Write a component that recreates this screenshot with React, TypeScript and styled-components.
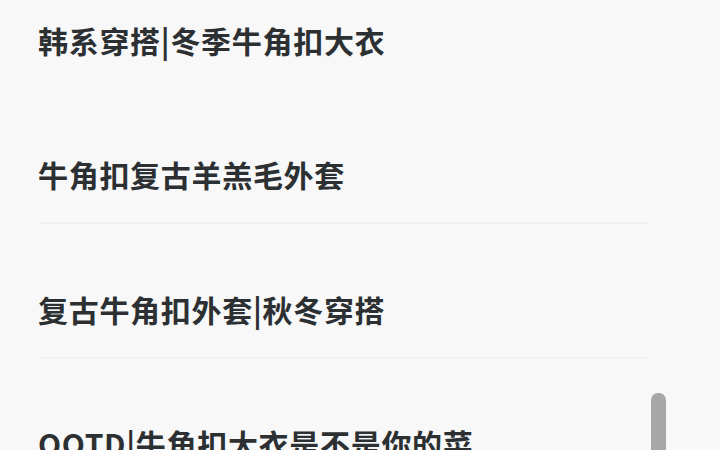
import React from "react";
import styled, { createGlobalStyle } from "styled-components";

const Global = createGlobalStyle`
  html, body { margin: 0; padding: 0; background: #f8f8f8; overflow: hidden; }
  #root { width: 720px; height: 450px; }
`;

const Page = styled.div`
  position: relative;
  width: 720px;
  height: 450px;
  overflow: hidden;
  background: #f8f8f8;
  display: flex;
`;

const List = styled.ul`
  list-style: none;
  margin: 0;
  padding: 0 0 0 40px;
  width: 608px;
  display: flex;
  flex-direction: column;
`;

const Item = styled.li`
  flex: 0 0 auto;
  height: 134.5px;
  box-sizing: border-box;
  padding-top: 19.5px;
  display: flex;
  flex-direction: column;
`;

const Title = styled.div`
  font-family: "Noto Sans CJK SC", "Noto Sans", sans-serif;
  font-weight: 700;
  font-size: 30px;
  line-height: 40px;
  letter-spacing: 0.7px;
  color: #2c3033;
  margin-left: -2px;
  white-space: nowrap;
`;

const Divider = styled.div<{ $show: boolean }>`
  margin-top: 28px;
  height: 2px;
  background: ${(p) => (p.$show ? "#f0f0f0" : "transparent")};
`;

const Track = styled.div`
  flex: 1;
  margin-left: 27px;
  background: #f9f9fa;
`;

const Thumb = styled.div`
  position: absolute;
  left: 651px;
  top: 393px;
  width: 15px;
  height: 80px;
  border-radius: 7px;
  background: #a7a7a7;
`;

const items = [
  "韩系穿搭|冬季牛角扣大衣",
  "牛角扣复古羊羔毛外套",
  "复古牛角扣外套|秋冬穿搭",
  "OOTD|牛角扣大衣是不是你的菜",
];

export default function App() {
  return (
    <Page>
      <Global />
      <List>
        {items.map((t, i) => (
          <Item key={i}>
            <Title>{t}</Title>
            <Divider $show={i === 1 || i === 2} />
          </Item>
        ))}
      </List>
      <Track />
      <Thumb />
    </Page>
  );
}
